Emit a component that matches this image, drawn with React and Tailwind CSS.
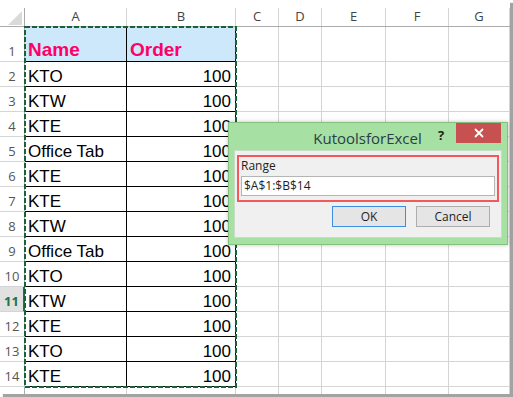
import React from 'react'

const cols = [
  { name: 'A', w: 'w-[102px]' },
  { name: 'B', w: 'w-[109px]' },
  { name: 'C', w: 'w-[43px]' },
  { name: 'D', w: 'w-[43px]' },
  { name: 'E', w: 'w-[64px]' },
  { name: 'F', w: 'w-[63px]' },
  { name: 'G', w: 'w-[61px]' },
]

const rows = [
  'KTO', 'KTW', 'KTE', 'Office Tab', 'KTE', 'KTE', 'KTW',
  'Office Tab', 'KTO', 'KTW', 'KTE', 'KTO', 'KTE',
]

const hdrFont = { fontFamily: '"Open Sans", "Noto Sans", sans-serif' }
const cellFont = { fontFamily: '"Liberation Sans", Arial, sans-serif' }

function EmptyCells({ h }) {
  return cols.slice(2).map((c) => (
    <div key={c.name} className={`${c.w} ${h} shrink-0 border-r border-b border-[#d4d4d4]`} />
  ))
}

function RowHeader({ n, active, h }) {
  return (
    <div
      style={hdrFont}
      className={
        active
          ? `w-[25px] ${h} shrink-0 flex items-end justify-center pb-[2px] bg-[#e1e1e1] border-r-2 border-r-[#217346] border-b border-b-[#d4d4d4] text-[13px] leading-[15px] font-bold text-[#217346]`
          : `w-[25px] ${h} shrink-0 flex items-end justify-center pb-[2px] border-r border-r-[#ababab] border-b border-b-[#d4d4d4] text-[13px] leading-[15px] text-[#555]`
      }
    >
      {n}
    </div>
  )
}

function Sheet() {
  return (
    <div className="w-[510px] h-[394px] bg-white shadow-[3px_3px_1px_#a3a3a3] overflow-hidden pt-2">
      {/* column letters */}
      <div className="flex h-[19px] border-b border-[#ababab]" style={hdrFont}>
        <div className="w-[25px] shrink-0 border-r border-[#ababab] flex items-end justify-end pr-[2px] pb-[1px]">
          <svg width="14" height="14" viewBox="0 0 14 14">
            <polygon points="14,0 14,14 0,14" fill="#dadada" />
          </svg>
        </div>
        {cols.map((c) => (
          <div
            key={c.name}
            className={`${c.w} shrink-0 border-r border-[#d4d4d4] flex items-center justify-center text-[13px] text-[#444]`}
          >
            {c.name}
          </div>
        ))}
      </div>

      {/* title row */}
      <div className="flex">
        <RowHeader n={1} h="h-[35px]" />
        <div
          style={cellFont}
          className="w-[102px] h-[35px] shrink-0 bg-[#cce8fa] border-r border-b border-black flex items-end pl-[3px] pb-[1px] text-[19px] leading-[20px] font-bold text-[#ff0066]"
        >
          Name
        </div>
        <div
          style={cellFont}
          className="w-[109px] h-[35px] shrink-0 bg-[#cce8fa] border-r border-b border-black flex items-end pl-[3px] pb-[1px] text-[19px] leading-[20px] font-bold text-[#ff0066]"
        >
          Order
        </div>
        <EmptyCells h="h-[35px]" />
      </div>

      {rows.map((name, i) => (
        <div key={i} className="flex">
          <RowHeader n={i + 2} active={i + 2 === 11} h="h-[25px]" />
          <div
            style={cellFont}
            className="w-[102px] h-[25px] shrink-0 border-r border-b border-black flex items-end pl-[3px] pb-[1px] text-[17px] leading-[17px] text-black"
          >
            {name}
          </div>
          <div
            style={cellFont}
            className="w-[109px] h-[25px] shrink-0 border-r border-b border-black flex items-end justify-end pr-[4px] pb-[1px] text-[17px] leading-[17px] text-black"
          >
            100
          </div>
          <EmptyCells h="h-[25px]" />
        </div>
      ))}

      {/* partial row 15 */}
      <div className="flex">
        <div className="w-[25px] h-[25px] shrink-0 border-r border-[#ababab]" />
        <div className="w-[102px] h-[25px] shrink-0 border-r border-[#d4d4d4]" />
        <div className="w-[109px] h-[25px] shrink-0 border-r border-[#d4d4d4]" />
        {cols.slice(2).map((c) => (
          <div key={c.name} className={`${c.w} h-[25px] shrink-0 border-r border-[#d4d4d4]`} />
        ))}
      </div>
    </div>
  )
}

function RangeDialog() {
  return (
    <div
      style={hdrFont}
      className="absolute left-[228px] top-[122px] w-[280px] h-[123px] bg-[#a6e0a2] border border-[#84c07f] flex flex-col shadow-[0_0_4px_rgba(0,0,0,0.25)]"
    >
      <div className="h-[27px] flex items-start">
        <div className="flex-1 text-center pt-[4px] pl-[68px] text-[15px] text-[#2a3d4a]">KutoolsforExcel</div>
        <div className="w-[18px] pt-[3px] text-[13px] font-bold text-[#222]">?</div>
        <div className="w-[45px] h-[20px] mr-[6px] bg-[#c75050] flex items-center justify-center">
          <svg width="10" height="10" viewBox="0 0 10 10">
            <path d="M1 1 L9 9 M9 1 L1 9" stroke="#fff" strokeWidth="1.8" />
          </svg>
        </div>
      </div>
      <div className="mx-[5px] mb-[6px] flex-1 bg-[#f0f0f0] border border-[#c9dcc8] pt-[4px] px-[2px]">
        <div className="h-[47px] border-2 border-[#f25a5a] px-[2px] pt-[1px]">
          <div className="text-[12px] leading-[16px] text-[#1e1e1e]">Range</div>
          <div className="mt-[2px] h-[20px] bg-white border border-[#b5b5b5] flex items-center px-[2px] text-[12px] text-[#1e1e1e]">
            $A$1:$B$14
          </div>
        </div>
        <div className="flex justify-end gap-[10px] pr-[9px] mt-[4px]">
          <button className="w-[74px] h-[21px] bg-[#e5e5e5] border border-[#3c8fe0] text-[12px] text-[#1e1e1e]">
            OK
          </button>
          <button className="w-[74px] h-[21px] bg-[#e5e5e5] border border-[#adadad] text-[12px] text-[#1e1e1e]">
            Cancel
          </button>
        </div>
      </div>
    </div>
  )
}

export default function App() {
  return (
    <div className="relative w-[513px] h-[397px] bg-white overflow-hidden">
      <Sheet />
      {/* copy range marquee over A1:B14 */}
      <svg className="absolute left-[24px] top-[26px]" width="214" height="363">
        <rect x="1" y="1" width="211" height="360" fill="none" stroke="#176238" strokeWidth="2" strokeDasharray="5 2" />
      </svg>
      <RangeDialog />
    </div>
  )
}
